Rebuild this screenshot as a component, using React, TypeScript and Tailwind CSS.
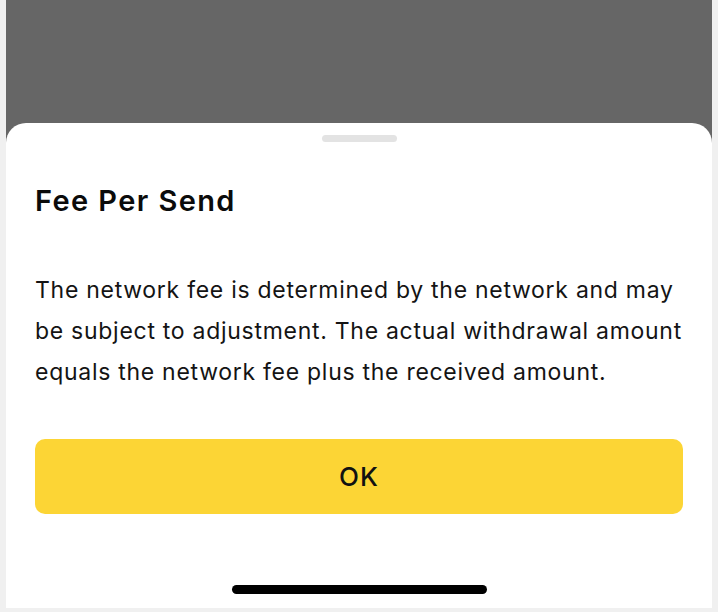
import React from 'react'

const lines = [
  'The network fee is determined by the network and may',
  'be subject to adjustment. The actual withdrawal amount',
  'equals the network fee plus the received amount.',
]

export default function App() {
  return (
    <div className="w-[718px] h-[612px] bg-[#f0f0f0] overflow-hidden">
      <div className="ml-[6px] w-[706px] h-[608px] bg-[#666666] flex flex-col">
        <div className="mt-[123px] flex-1 bg-white rounded-t-[20px] flex flex-col items-stretch" style={{ fontFamily: 'Inter, "Noto Sans", sans-serif' }}>
          <div className="pt-[12px] flex justify-center">
            <div className="w-[75px] h-[7px] rounded-full bg-[#e3e3e3]" />
          </div>
          <h2 className="mt-[41px] px-[29px] text-[29px] leading-[36px] font-semibold tracking-[1.4px] text-[#0b0b0b]">Fee Per Send</h2>
          <p className="mt-[51px] px-[29px] text-[23px] leading-[41px] tracking-[0.72px] text-[#141414]">
            {lines.map((l) => (
              <span key={l} className="block whitespace-nowrap">{l}</span>
            ))}
          </p>
          <div className="mt-[46px] px-[29px]">
            <button className="w-full h-[75px] rounded-[10px] bg-[#fcd535] text-[26px] font-medium tracking-[1px] text-[#111]">OK</button>
          </div>
          <div className="mt-auto mb-[14px] flex justify-center">
            <div className="w-[255px] h-[9px] rounded-full bg-black" />
          </div>
        </div>
      </div>
    </div>
  )
}
